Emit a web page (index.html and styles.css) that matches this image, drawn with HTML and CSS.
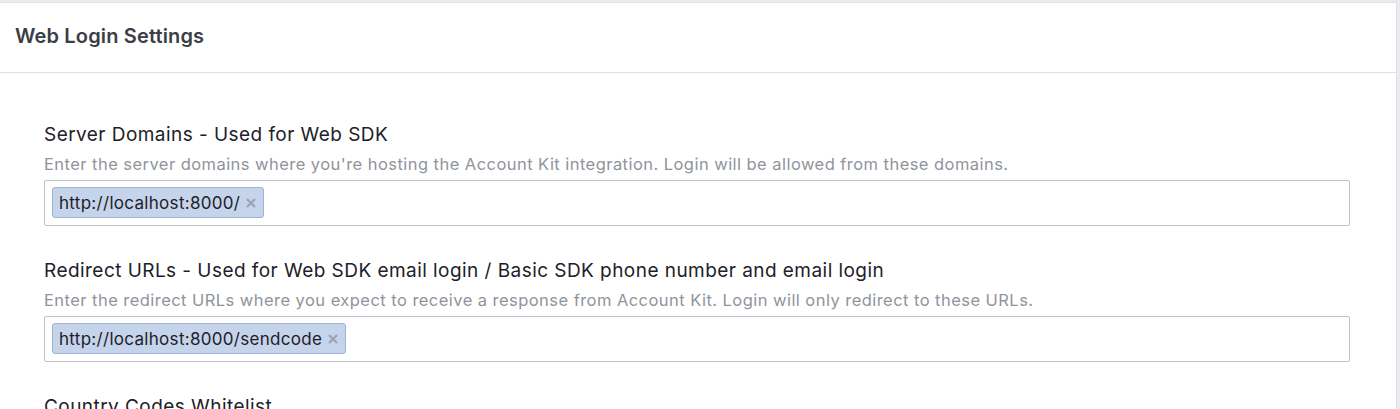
FILE: index.html
```html
<!DOCTYPE html>
<html>
<head>
<meta charset="utf-8">
<link rel="stylesheet" href="styles.css">
</head>
<body>
<div class="card">
  <div class="card-header">Web Login Settings</div>
  <div class="card-body">
    <div class="field">
      <div class="field-label">Server Domains - Used for Web SDK</div>
      <div class="field-desc">Enter the server domains where you're hosting the Account Kit integration. Login will be allowed from these domains.</div>
      <div class="token-input">
        <span class="token">http://localhost:8000/<svg class="token-x" viewBox="0 0 10 10" width="10" height="10"><path d="M1 1L9 9M9 1L1 9"/></svg></span>
      </div>
    </div>
    <div class="field">
      <div class="field-label">Redirect URLs - Used for Web SDK email login / Basic SDK phone number and email login</div>
      <div class="field-desc">Enter the redirect URLs where you expect to receive a response from Account Kit. Login will only redirect to these URLs.</div>
      <div class="token-input">
        <span class="token">http://localhost:8000/sendcode<svg class="token-x" viewBox="0 0 10 10" width="10" height="10"><path d="M1 1L9 9M9 1L1 9"/></svg></span>
      </div>
    </div>
    <div class="field">
      <div class="field-label">Country Codes Whitelist</div>
    </div>
  </div>
</div>
</body>
</html>
```

FILE: styles.css
```css
html, body {
  margin: 0;
  padding: 0;
}
body {
  background: #e9ebee;
  padding-top: 2px;
  font-family: Inter, "Liberation Sans", sans-serif;
  height: 409px;
  overflow: hidden;
}
.card {
  background: #ffffff;
  border: 1px solid #dddfe2;
  border-left: none;
  margin-right: 3px;
  min-height: 500px;
}
.card-header {
  height: 70px;
  box-sizing: border-box;
  padding: 0 0 3px 15px;
  display: flex;
  align-items: center;
  font-size: 20px;
  font-weight: 600;
  letter-spacing: 0.15px;
  color: #3b3e45;
  border-bottom: 1px solid #dddfe2;
}
.card-body {
  padding: 51px 46px 0 44px;
}
.field {
  margin-bottom: 34px;
}
.field-label {
  font-size: 19px;
  line-height: 22px;
  letter-spacing: 0.45px;
  color: #1d2129;
  margin-bottom: 8px;
}
.field-desc {
  font-size: 16.5px;
  line-height: 20px;
  letter-spacing: 0.45px;
  color: #90949c;
  margin-bottom: 6px;
}
.token-input {
  height: 46px;
  box-sizing: border-box;
  border: 1px solid #bdc1c9;
  border-radius: 2px;
  padding: 6px 7px;
  display: flex;
  align-items: flex-start;
}
.token {
  display: inline-flex;
  align-items: center;
  height: 31px;
  box-sizing: border-box;
  padding: 0 7px 0 6px;
  background: #c6d4eb;
  border: 1px solid #9cb4d8;
  border-radius: 3px;
  font-size: 17px;
  letter-spacing: 0.3px;
  color: #1d2129;
}
.token-x {
  margin-left: 6px;
  stroke: #9ea5b2;
  stroke-width: 2.4;
  fill: none;
}
```
